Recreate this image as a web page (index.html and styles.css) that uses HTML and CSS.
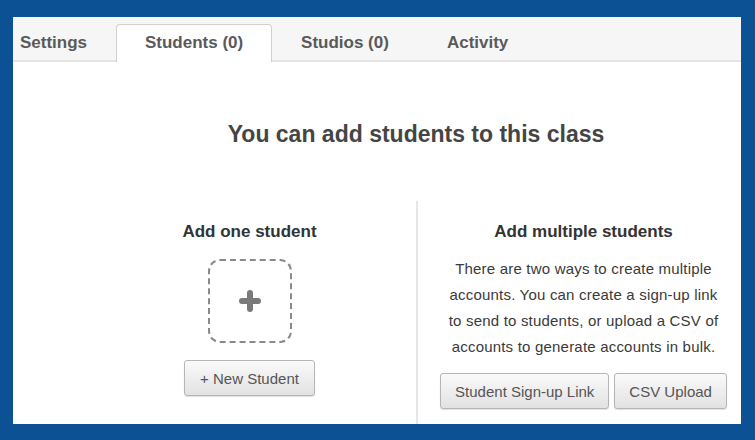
FILE: index.html
```html
<!DOCTYPE html>
<html lang="en">
<head>
    <meta charset="UTF-8">
    <title>Students</title>
    <link rel="stylesheet" href="styles.css">
</head>
<body>
    <div class="panel">
        <div class="tabs">
            <div class="tab tab-settings">Settings</div>
            <div class="tab active">Students (0)</div>
            <div class="tab">Studios (0)</div>
            <div class="tab">Activity</div>
        </div>

        <div class="content">
            <h1>You can add students to this class</h1>

            <div class="columns">
                <div class="col">
                    <h3>Add one student</h3>
                    <div class="add-box">
                        <svg width="24" height="24" viewBox="0 0 24 24">
                            <path d="M12 4v16M4 12h16" stroke="#7a7a7a" stroke-width="6" stroke-linecap="round"/>
                        </svg>
                    </div>
                    <button class="btn">+ New Student</button>
                </div>
                <div class="col col-right">
                    <h3>Add multiple students</h3>
                    <p>There are two ways to create multiple accounts. You can create a sign-up link to send to students, or upload a CSV of accounts to generate accounts in bulk.</p>
                    <div class="btn-row">
                        <button class="btn">Student Sign-up Link</button>
                        <button class="btn">CSV Upload</button>
                    </div>
                </div>
            </div>
        </div>
    </div>
</body>
</html>
```

FILE: styles.css
```css
html, body {
    margin: 0;
    height: 100%;
}
body {
    background: #0c5193;
    font-family: "Liberation Sans", Arial, sans-serif;
    padding: 17px 14px 16px 13px;
    box-sizing: border-box;
    overflow: hidden;
}
.panel {
    background: #fff;
    height: 100%;
    display: flex;
    flex-direction: column;
}
.tabs {
    display: flex;
    align-items: flex-end;
    height: 43px;
    background: #f6f6f6;
    border-bottom: 2px solid #e4e4e4;
    padding-left: 7px;
}
.tab {
    font-size: 17px;
    font-weight: bold;
    color: #5a5a5a;
    padding: 0 29px;
    height: 37px;
    line-height: 35px;
    margin-bottom: -2px;
}
.tab-settings {
    padding-left: 0;
}
.tab.active {
    background: #fff;
    border: 1px solid #d0d0d0;
    border-bottom: none;
    border-radius: 4px 4px 0 0;
    width: 156px;
    padding: 0;
    text-align: center;
    height: 38px;
    box-sizing: border-box;
}
.content {
    flex: 1;
    display: flex;
    flex-direction: column;
}
/* heading sits centred over the column divider */
h1 {
    margin: 58px 0 0;
    padding-left: 78px;
    text-align: center;
    font-size: 23px;
    color: #454545;
    line-height: 28px;
}
.columns {
    flex: 1;
    display: grid;
    grid-template-columns: 403px 1fr;
    margin-top: 53px;
}
.col {
    display: flex;
    flex-direction: column;
    align-items: center;
    padding-left: 70px;
}
.col-right {
    border-left: 2px solid #e6e6e6;
    padding: 0 12px 0 20px;
}
h3 {
    margin: 21px 0 0;
    font-size: 17px;
    color: #333;
    line-height: 20px;
}
.add-box {
    margin-top: 17px;
    width: 80px;
    height: 80px;
    border: 2px dashed #8a8a8a;
    border-radius: 12px;
    display: flex;
    align-items: center;
    justify-content: center;
}
.btn {
    font-family: inherit;
    font-size: 15px;
    color: #555;
    background: linear-gradient(#fafafa, #e2e2e2);
    border: 1px solid #b5b5b5;
    border-radius: 3px;
    height: 36px;
    padding: 0 14px;
    box-shadow: 0 1px 1px rgba(0,0,0,0.12);
}
.col .btn {
    margin-top: 17px;
    width: 131px;
}
.col-right p {
    margin: 14px 0 0;
    max-width: 284px;
    font-size: 15px;
    line-height: 26px;
    letter-spacing: 0.2px;
    color: #3a3a3a;
    text-align: center;
}
.btn-row {
    display: flex;
    gap: 5px;
    margin-top: 13px;
}
.btn-row .btn {
    margin-top: 0;
    width: auto;
}
```
